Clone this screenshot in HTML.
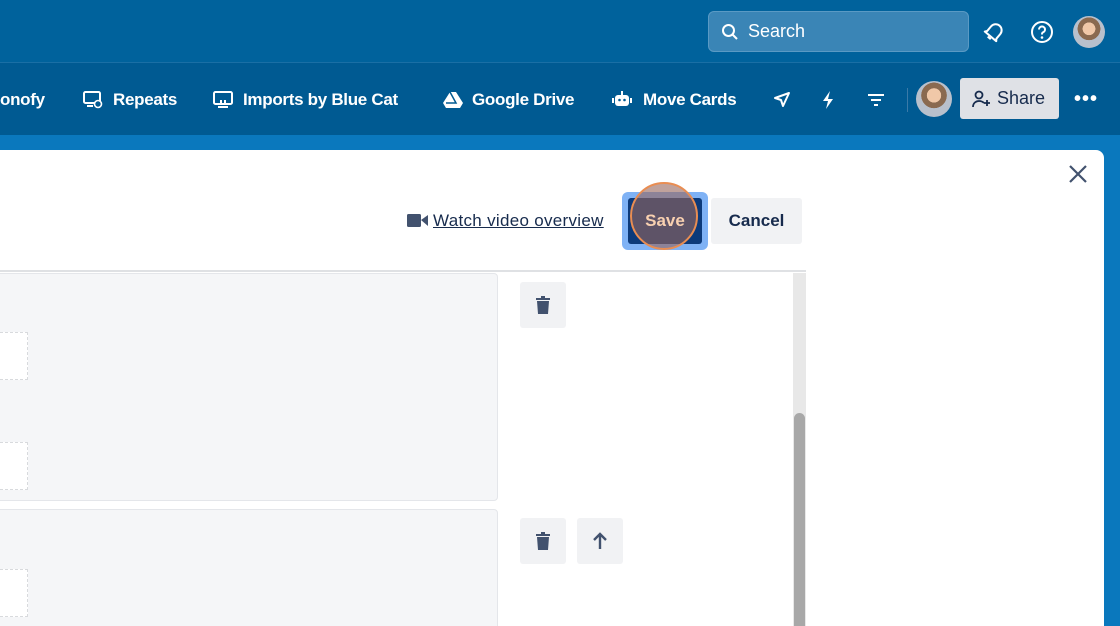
<!DOCTYPE html>
<html><head><style>
*{margin:0;padding:0;box-sizing:border-box}
html,body{width:1120px;height:626px;overflow:hidden}
body{position:relative;background:#0a78bd;font-family:"Liberation Sans",sans-serif}
.top{position:absolute;left:0;top:0;width:1120px;height:62px;background:#00629c}
.bar{position:absolute;left:0;top:62px;width:1120px;height:73px;background:#005a92;border-top:1px solid #1a6fa5}
.search{position:absolute;left:708px;top:11px;width:261px;height:41px;background:#3a85b6;border:1px solid #5a9ac4;border-radius:6px;color:#fff;font-size:18px;line-height:39px;padding-left:39px}
.nav{position:absolute;top:90px;color:#fff;font-size:17px;font-weight:bold;white-space:nowrap;letter-spacing:-0.3px}
.ic{position:absolute;top:90px}
.av{position:absolute;border-radius:50%;background:radial-gradient(circle at 50% 40%,#f0c8a8 0 25%,#8a6a50 26% 45%,#b8c0cc 46%)}
.modal{position:absolute;left:0;top:150px;width:1104px;height:476px;background:#fff;border-radius:0 8px 0 0;overflow:hidden}
.panel{position:absolute;left:-5px;width:503px;background:#f5f6f8;border:1px solid #e4e6ea;border-radius:4px}
.wb{position:absolute;left:0;width:28px;height:48px;background:#fff;border:1px dashed #d8dadd;border-left:none}
.btn{position:absolute;width:46px;height:46px;background:#f1f2f4;border-radius:3px}
</style></head><body>
<div class="top"></div>
<div class="bar"></div>
<div class="search"><svg style="position:absolute;left:12px;top:11px" width="18" height="18" viewBox="0 0 18 18"><circle cx="7.5" cy="7.5" r="5.5" fill="none" stroke="#fff" stroke-width="2"/><path d="M11.5 11.5L16 16" stroke="#fff" stroke-width="2"/></svg>Search</div>
<svg style="position:absolute;left:983px;top:19px" width="24" height="24" viewBox="0 0 24 24"><g transform="rotate(40 12 12)"><path d="M6 17V11a6 6 0 0 1 12 0v6l1.5 2h-15z" fill="none" stroke="#fff" stroke-width="2" stroke-linejoin="round"/><path d="M10 21h4" stroke="#fff" stroke-width="2"/></g></svg>
<svg style="position:absolute;left:1030px;top:20px" width="24" height="24" viewBox="0 0 24 24"><circle cx="12" cy="12" r="10" fill="none" stroke="#fff" stroke-width="2"/><path d="M9 9.5a3 3 0 1 1 4 2.8c-1 .4-1 1-1 2.2" fill="none" stroke="#fff" stroke-width="2"/><circle cx="12" cy="17.5" r="1.3" fill="#fff"/></svg>
<div class="av" style="left:1073px;top:16px;width:32px;height:32px"></div>
<div class="nav" style="left:0">onofy</div>
<svg class="ic" style="left:83px;top:91px" width="20" height="18" viewBox="0 0 20 18"><rect x="1" y="1" width="16" height="11" rx="1.5" fill="none" stroke="#fff" stroke-width="2"/><path d="M4 15h6" stroke="#fff" stroke-width="2"/><circle cx="15" cy="13" r="3.5" fill="#005a92" stroke="#fff" stroke-width="1.6"/></svg>
<div class="nav" style="left:113px">Repeats</div>
<svg class="ic" style="left:213px;top:91px" width="20" height="18" viewBox="0 0 20 18"><rect x="1" y="1" width="18" height="12" rx="1.5" fill="none" stroke="#fff" stroke-width="2"/><path d="M5 16h10M8 9v5M12 9v5" stroke="#fff" stroke-width="2"/></svg>
<div class="nav" style="left:243px">Imports by Blue Cat</div>
<svg class="ic" style="left:443px;top:91px" width="20" height="17" viewBox="0 0 20 17"><path d="M7 1h6l7 11-3 5H3L0 12z" fill="#fff"/><path d="M7 1l6 11H3" fill="none" stroke="#005a92" stroke-width="1.5"/></svg>
<div class="nav" style="left:472px">Google Drive</div>
<svg class="ic" style="left:612px;top:90px" width="20" height="18" viewBox="0 0 20 18"><rect x="3" y="5" width="14" height="11" rx="3" fill="#fff"/><rect x="0" y="8" width="2" height="5" fill="#fff"/><rect x="18" y="8" width="2" height="5" fill="#fff"/><path d="M10 1v4" stroke="#fff" stroke-width="2"/><circle cx="7.5" cy="10" r="1.3" fill="#005a92"/><circle cx="12.5" cy="10" r="1.3" fill="#005a92"/></svg>
<div class="nav" style="left:643px">Move Cards</div>
<svg style="position:absolute;left:772px;top:90px" width="20" height="20" viewBox="0 0 20 20"><path d="M17 3L3 8l6 2 2 6z" fill="none" stroke="#fff" stroke-width="2" stroke-linejoin="round"/></svg>
<svg style="position:absolute;left:820px;top:90px" width="16" height="20" viewBox="0 0 16 20"><path d="M10 1L3 11h5l-2 8 7-10H8z" fill="#fff"/></svg>
<svg style="position:absolute;left:866px;top:92px" width="20" height="16" viewBox="0 0 20 16"><path d="M2 3h16M5 8h10M8 13h4" stroke="#fff" stroke-width="2"/></svg>
<div style="position:absolute;left:907px;top:88px;width:1px;height:24px;background:#3a7aa8"></div>
<div class="av" style="left:916px;top:81px;width:36px;height:36px"></div>
<div style="position:absolute;left:960px;top:78px;width:99px;height:41px;background:#dfe1e6;border-radius:3px;color:#172b4d;font-size:18px;line-height:41px;padding-left:37px">Share<svg style="position:absolute;left:12px;top:12px" width="20" height="18" viewBox="0 0 20 18"><circle cx="7" cy="5" r="3.5" fill="none" stroke="#172b4d" stroke-width="1.8"/><path d="M1 17c0-4 3-6 6-6s4 1 5 2M15 10v6M12 13h6" fill="none" stroke="#172b4d" stroke-width="1.8"/></svg></div>
<div style="position:absolute;left:1074px;top:88px;color:#fff;font-size:20px;font-weight:bold;letter-spacing:1px">•••</div>
<div class="modal">
<svg style="position:absolute;left:1068px;top:14px" width="20" height="20" viewBox="0 0 20 20"><path d="M2 2l16 16M18 2L2 18" stroke="#42526e" stroke-width="2.2"/></svg>
<svg style="position:absolute;left:407px;top:63px" width="21" height="15" viewBox="0 0 21 15"><rect x="0" y="1" width="14" height="13" rx="1.5" fill="#42526e"/><path d="M14 7l7-5v11z" fill="#42526e"/></svg>
<div style="position:absolute;left:433px;top:61px;font-size:17px;color:#172b4d;text-decoration:underline;letter-spacing:0.3px">Watch video overview</div>
<div style="position:absolute;left:622px;top:42px;width:86px;height:58px;background:#7fb2f5;border-radius:6px"></div>
<div style="position:absolute;left:628px;top:48px;width:74px;height:46px;background:#0c3a7a;border-radius:3px"></div>
<div style="position:absolute;left:630px;top:32px;width:68px;height:68px;border-radius:50%;background:rgba(150,100,90,.6);border:2px solid #e98d52"></div>
<div style="position:absolute;left:628px;top:61px;width:74px;text-align:center;font-size:17px;font-weight:bold;color:#f8d0b0">Save</div>
<div style="position:absolute;left:711px;top:48px;width:91px;height:46px;background:#f1f2f4;border-radius:3px;text-align:center;line-height:46px;font-size:17px;font-weight:bold;color:#172b4d">Cancel</div>
<div style="position:absolute;left:0;top:120px;width:806px;height:2px;background:#dfe1e4"></div>
<div style="position:absolute;left:793px;top:123px;width:13px;height:360px;background:#e8e8e8"></div>
<div style="position:absolute;left:794px;top:263px;width:11px;height:240px;background:#a8a8a8;border-radius:6px 6px 0 0"></div>
<div class="panel" style="top:123px;height:228px"></div>
<div class="wb" style="top:182px"></div>
<div class="wb" style="top:292px"></div>
<div class="panel" style="top:359px;height:140px"></div>
<div class="wb" style="top:419px"></div>
<div class="btn" style="left:520px;top:132px"><svg style="position:absolute;left:15px;top:13px" width="16" height="20" viewBox="0 0 16 20"><path d="M1 3h14v2H1zM6 1h4v2H6zM2 6h12l-1 13H3z" fill="#42526e"/></svg></div>
<div class="btn" style="left:520px;top:368px"><svg style="position:absolute;left:15px;top:13px" width="16" height="20" viewBox="0 0 16 20"><path d="M1 3h14v2H1zM6 1h4v2H6zM2 6h12l-1 13H3z" fill="#42526e"/></svg></div>
<div class="btn" style="left:577px;top:368px"><svg style="position:absolute;left:14px;top:13px" width="18" height="20" viewBox="0 0 18 20"><path d="M9 18V3M3 9l6-6 6 6" fill="none" stroke="#42526e" stroke-width="2.4"/></svg></div>
</div>
</body></html>
